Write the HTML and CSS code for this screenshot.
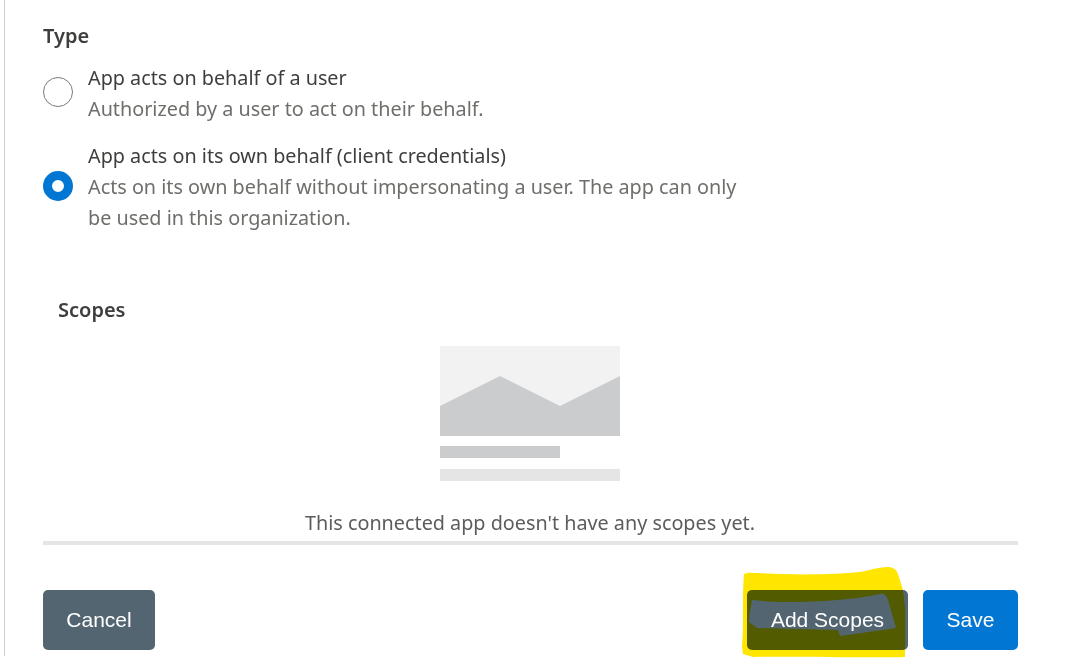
FILE: index.html
```html
<!DOCTYPE html>
<html lang="en">
<head>
<meta charset="utf-8">
<title>Connected app</title>
<link rel="stylesheet" href="styles.css">
</head>
<body>
<main class="frame">
  <section class="type">
    <h2 class="heading">Type</h2>
    <label class="option option-first">
      <span class="radio"></span>
      <span class="option-text">
        <span class="option-title">App acts on behalf of a user</span>
        <span class="option-desc">Authorized by a user to act on their behalf.</span>
      </span>
    </label>
    <label class="option">
      <span class="radio radio-on"></span>
      <span class="option-text">
        <span class="option-title">App acts on its own behalf (client credentials)</span>
        <span class="option-desc">Acts on its own behalf without impersonating a user. The app can only be used in this organization.</span>
      </span>
    </label>
  </section>
  <section class="scopes">
    <h2 class="heading scopes-heading">Scopes</h2>
    <div class="empty">
      <svg class="empty-art" width="180" height="135" viewBox="0 0 180 135" aria-hidden="true">
        <rect width="180" height="90" fill="#f2f2f2"/>
        <path d="M0 60 60 30 120 60 180 30V90H0Z" fill="#cbcccd"/>
        <rect y="100" width="120" height="12" fill="#cbcccd"/>
        <rect y="123" width="180" height="12" fill="#e5e5e5"/>
      </svg>
      <p class="empty-text">This connected app doesn't have any scopes yet.</p>
    </div>
  </section>
  <footer class="actions">
    <button class="btn btn-grey" type="button">Cancel</button>
    <div class="actions-right">
      <div class="marked">
        <button class="btn btn-grey btn-add" type="button"><span class="btn-label">Add Scopes</span></button>
        <svg class="marker" width="170" height="95" viewBox="0 0 170 95" aria-hidden="true">
          <path fill-rule="evenodd" fill="#ffe600" d="M2 7C6 5 10 6 16 6 50 8 90 8 118 5 128 3 138 0 146 0 151 0 154 2 156 7L161 23 163 40 163 90C120 91 50 89 11 90L1 87 0 80C2 55 0 30 2 7ZM10 33C9 40 7 48 7 55L15 61 96 63 98 69 154 61 146 33C145 29 142 26 138 27 125 30 110 32 95 33 70 35 55 35 45 35 33 35 20 34 10 33Z"/>
        </svg>
      </div>
      <button class="btn btn-blue" type="button">Save</button>
    </div>
  </footer>
</main>
</body>
</html>
```

FILE: styles.css
```css
* {
  box-sizing: border-box;
}

html, body {
  margin: 0;
  background: #fff;
}

body {
  width: 1066px;
  height: 666px;
  overflow: hidden;
  font-family: "Noto Sans", "Open Sans", sans-serif;
  color: #3e3e3c;
}

.frame {
  margin-left: 4px;
  width: 1014px;
  height: 656px;
  border-left: 1px solid #cccccc;
  padding: 22px 0 0 38px;
  display: flex;
  flex-direction: column;
}

.heading {
  margin: 0;
  font-size: 20px;
  line-height: 28px;
  font-weight: 600;
  color: #3e3e3c;
}

.option {
  display: flex;
  align-items: center;
  gap: 15px;
  margin-top: 16px;
  width: 700px;
}

.option-first {
  margin-top: 12px;
}

.radio {
  flex: none;
  width: 30px;
  height: 30px;
  margin-bottom: 2px;
  border-radius: 50%;
  border: 1px solid #7a7a7a;
  background: #fff;
}

.radio-on {
  border: 9.5px solid #0176d3;
}

.option-text {
  display: flex;
  flex-direction: column;
}

.option-title {
  font-size: 19.8px;
  line-height: 31px;
  color: #3e3e3c;
}

.option-desc {
  font-size: 19.8px;
  line-height: 31px;
  color: #706e6b;
}

.scopes {
  margin-top: 63px;
}

.scopes-heading {
  margin-left: 15px;
}

.empty {
  display: flex;
  flex-direction: column;
  align-items: center;
  margin-top: 22px;
  padding-bottom: 3px;
  border-bottom: 4px solid #e5e5e5;
}

.empty-art {
  display: block;
  margin-right: 1px;
}

.empty-text {
  margin: 27px 1px 0 0;
  font-size: 19.8px;
  line-height: 30px;
  color: #5c5c5c;
}

.actions {
  display: flex;
  justify-content: space-between;
  margin-top: 45px;
}

.actions-right {
  display: flex;
  gap: 15px;
}

.btn {
  height: 60px;
  border: 0;
  border-radius: 5px;
  padding: 0;
  font-family: "Liberation Sans", Arial, sans-serif;
  font-size: 21px;
  color: #fff;
}

.btn-grey {
  background: #526570;
  width: 112px;
}

.btn-add {
  width: 161px;
}

.btn-blue {
  background: #0176d3;
  width: 95px;
}

.marked {
  position: relative;
}

.marker {
  position: absolute;
  left: -5px;
  top: -23px;
  mix-blend-mode: multiply;
  pointer-events: none;
}
```
